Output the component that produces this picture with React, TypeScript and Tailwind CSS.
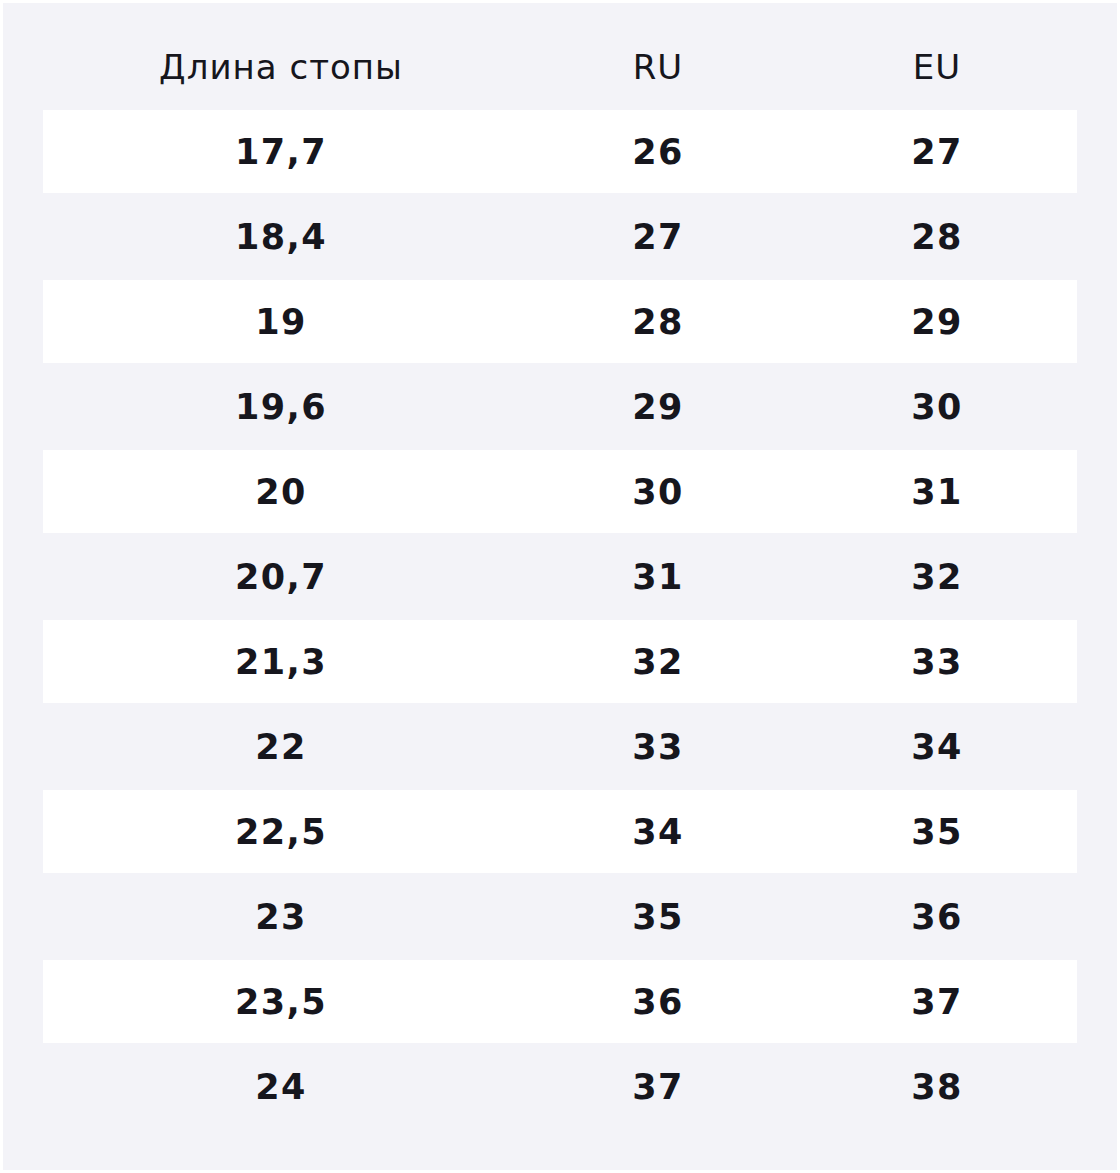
const rows: [string, string, string][] = [
  ["17,7", "26", "27"],
  ["18,4", "27", "28"],
  ["19", "28", "29"],
  ["19,6", "29", "30"],
  ["20", "30", "31"],
  ["20,7", "31", "32"],
  ["21,3", "32", "33"],
  ["22", "33", "34"],
  ["22,5", "34", "35"],
  ["23", "35", "36"],
  ["23,5", "36", "37"],
  ["24", "37", "38"],
];

export default function App() {
  return (
    <div className="bg-white p-[3px] font-['DejaVu_Sans',sans-serif] text-[#16161d]">
      <div className="bg-[#f3f3f8] px-10 pt-[22px] pb-10 w-[1114px] h-[1167px]">
        <div className="grid grid-cols-[476px_278px_280px] h-[85px] items-center text-center text-[34px] tracking-[0.03em]">
          <div>Длина стопы</div>
          <div>RU</div>
          <div>EU</div>
        </div>
        {rows.map((r, i) => (
          <div
            key={i}
            className={
              i % 2 === 0
                ? "grid grid-cols-[476px_278px_280px] h-[83px] pt-[2px] items-center text-center bg-white text-[35px] font-bold tracking-[0.04em]"
                : "grid grid-cols-[476px_278px_280px] h-[87px] pt-[2px] items-center text-center text-[35px] font-bold tracking-[0.04em]"
            }
          >
            <div>{r[0]}</div>
            <div>{r[1]}</div>
            <div>{r[2]}</div>
          </div>
        ))}
      </div>
    </div>
  );
}
